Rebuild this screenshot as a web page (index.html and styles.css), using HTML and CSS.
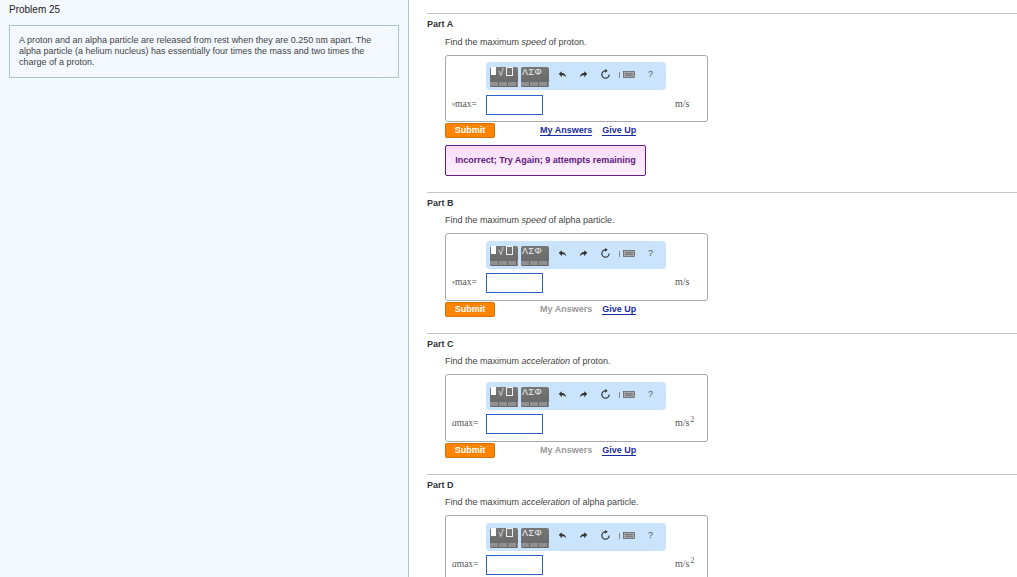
FILE: index.html
```html
<!DOCTYPE html>
<html lang="en">
<head>
<meta charset="utf-8">
<title>Problem 25</title>
<link rel="stylesheet" href="styles.css">
</head>
<body>
<div class="page">
  <aside class="left">
    <h1 class="prob">Problem 25</h1>
    <div class="intro">A proton and an alpha particle are released from rest when they are 0.250 <span class="serif">nm</span> apart. The alpha particle (a helium nucleus) has essentially four times the mass and two times the charge of a proton.</div>
  </aside>
  <main class="right">
    <section class="part">
      <h2 class="ptitle">Part A</h2>
      <p class="q">Find the maximum <em>speed</em> of proton.</p>
      <div class="box">
        <div class="tbwrap"><div class="toolbar">
          <span class="tpl"><span class="tpl-t"><i class="sq"></i>√<i class="sq2"></i></span><span class="tpl-b"></span></span>
          <span class="tpl"><span class="tpl-t greek">ΛΣΦ</span><span class="tpl-b"></span></span>
          <svg class="ic ic1" viewBox="0 0 12 12"><path d="M1 5 5 1.5V4c3.500 0 5.500 2 6 6-1.500-2.500-3-3-6-3v2.500z"/></svg>
          <svg class="ic ic2" viewBox="0 0 12 12"><path d="M11 5 7 1.500V4C3.500 4 1.500 6 1 10c1.500-2.500 3-3 6-3v2.500z"/></svg>
          <svg class="ic3" viewBox="0 0 12 12"><path d="M6 2a4 4 0 1 0 4 4"/><path class="fillp" d="M5.500 0 8.500 2 5.500 4z"/></svg>
          <span class="kb"><i class="bar"></i><svg class="kbd" viewBox="0 0 14 8"><rect x=".5" y=".5" width="13" height="7"/><path d="M2.500 3h9M2.500 5h9"/></svg></span>
          <span class="help">?</span>
        </div></div>
        <div class="row">
          <span class="var"><i class="vv">v</i>max=</span>
          <span class="inp"></span>
          <span class="unit">m/s</span>
        </div>
      </div>
      <div class="actions">
        <span class="submit">Submit</span>
        <span class="links"><a class="link">My Answers</a><a class="link">Give Up</a></span>
      </div>
      <div class="msg">Incorrect; Try Again; 9 attempts remaining</div>
    </section>
    <section class="part">
      <h2 class="ptitle">Part B</h2>
      <p class="q">Find the maximum <em>speed</em> of alpha particle.</p>
      <div class="box">
        <div class="tbwrap"><div class="toolbar">
          <span class="tpl"><span class="tpl-t"><i class="sq"></i>√<i class="sq2"></i></span><span class="tpl-b"></span></span>
          <span class="tpl"><span class="tpl-t greek">ΛΣΦ</span><span class="tpl-b"></span></span>
          <svg class="ic ic1" viewBox="0 0 12 12"><path d="M1 5 5 1.5V4c3.500 0 5.500 2 6 6-1.500-2.500-3-3-6-3v2.500z"/></svg>
          <svg class="ic ic2" viewBox="0 0 12 12"><path d="M11 5 7 1.500V4C3.500 4 1.500 6 1 10c1.500-2.500 3-3 6-3v2.500z"/></svg>
          <svg class="ic3" viewBox="0 0 12 12"><path d="M6 2a4 4 0 1 0 4 4"/><path class="fillp" d="M5.500 0 8.500 2 5.500 4z"/></svg>
          <span class="kb"><i class="bar"></i><svg class="kbd" viewBox="0 0 14 8"><rect x=".5" y=".5" width="13" height="7"/><path d="M2.500 3h9M2.500 5h9"/></svg></span>
          <span class="help">?</span>
        </div></div>
        <div class="row">
          <span class="var"><i class="vv">v</i>max=</span>
          <span class="inp"></span>
          <span class="unit">m/s</span>
        </div>
      </div>
      <div class="actions">
        <span class="submit">Submit</span>
        <span class="links"><a class="link off">My Answers</a><a class="link">Give Up</a></span>
      </div>
    </section>
    <section class="part">
      <h2 class="ptitle">Part C</h2>
      <p class="q">Find the maximum <em>acceleration</em> of proton.</p>
      <div class="box">
        <div class="tbwrap"><div class="toolbar">
          <span class="tpl"><span class="tpl-t"><i class="sq"></i>√<i class="sq2"></i></span><span class="tpl-b"></span></span>
          <span class="tpl"><span class="tpl-t greek">ΛΣΦ</span><span class="tpl-b"></span></span>
          <svg class="ic ic1" viewBox="0 0 12 12"><path d="M1 5 5 1.5V4c3.500 0 5.500 2 6 6-1.500-2.500-3-3-6-3v2.500z"/></svg>
          <svg class="ic ic2" viewBox="0 0 12 12"><path d="M11 5 7 1.500V4C3.500 4 1.500 6 1 10c1.500-2.500 3-3 6-3v2.500z"/></svg>
          <svg class="ic3" viewBox="0 0 12 12"><path d="M6 2a4 4 0 1 0 4 4"/><path class="fillp" d="M5.500 0 8.500 2 5.500 4z"/></svg>
          <span class="kb"><i class="bar"></i><svg class="kbd" viewBox="0 0 14 8"><rect x=".5" y=".5" width="13" height="7"/><path d="M2.500 3h9M2.500 5h9"/></svg></span>
          <span class="help">?</span>
        </div></div>
        <div class="row">
          <span class="var"><i class="aa">a</i>max=</span>
          <span class="inp"></span>
          <span class="unit">m/s<sup class="sup">2</sup></span>
        </div>
      </div>
      <div class="actions">
        <span class="submit">Submit</span>
        <span class="links"><a class="link off">My Answers</a><a class="link">Give Up</a></span>
      </div>
    </section>
    <section class="part">
      <h2 class="ptitle">Part D</h2>
      <p class="q">Find the maximum <em>acceleration</em> of alpha particle.</p>
      <div class="box">
        <div class="tbwrap"><div class="toolbar">
          <span class="tpl"><span class="tpl-t"><i class="sq"></i>√<i class="sq2"></i></span><span class="tpl-b"></span></span>
          <span class="tpl"><span class="tpl-t greek">ΛΣΦ</span><span class="tpl-b"></span></span>
          <svg class="ic ic1" viewBox="0 0 12 12"><path d="M1 5 5 1.5V4c3.500 0 5.500 2 6 6-1.500-2.500-3-3-6-3v2.500z"/></svg>
          <svg class="ic ic2" viewBox="0 0 12 12"><path d="M11 5 7 1.500V4C3.500 4 1.500 6 1 10c1.500-2.500 3-3 6-3v2.500z"/></svg>
          <svg class="ic3" viewBox="0 0 12 12"><path d="M6 2a4 4 0 1 0 4 4"/><path class="fillp" d="M5.500 0 8.500 2 5.500 4z"/></svg>
          <span class="kb"><i class="bar"></i><svg class="kbd" viewBox="0 0 14 8"><rect x=".5" y=".5" width="13" height="7"/><path d="M2.500 3h9M2.500 5h9"/></svg></span>
          <span class="help">?</span>
        </div></div>
        <div class="row">
          <span class="var"><i class="aa">a</i>max=</span>
          <span class="inp"></span>
          <span class="unit">m/s<sup class="sup">2</sup></span>
        </div>
      </div>
    </section>
  </main>
</div>
</body>
</html>
```
FILE: styles.css
```css
html, body { margin: 0; padding: 0; height: 100%; overflow: hidden; background: #fff; }
body { font-family: "Liberation Sans", Arial, sans-serif; font-size: 9px; color: #333; }
.page { display: flex; height: 577px; overflow: hidden; }
.left { box-sizing: border-box; width: 409px; flex: none; background: #f4f9ff; border-right: 1px solid #a9c5dc; padding: 4px 9px 0; }
.prob { margin: 0; font-size: 10px; font-weight: 400; line-height: 12px; color: #222; }
.intro { box-sizing: border-box; width: 390px; height: 53px; margin-top: 9px; border: 1px solid #a9c5dc; padding: 9px 9px 0; font-size: 9px; line-height: 11px; color: #444; }
.serif { font-family: "Liberation Serif", serif; font-size: 9.500px; line-height: 9px; }
.right { flex: 1; min-width: 0; padding: 13px 0 0 18px; }
.part { border-top: 1px solid #c4c4c4; height: 140px; }
.part:first-child { height: 178px; }
.ptitle { margin: 0; padding-top: 5px; font-size: 9px; line-height: 11px; font-weight: 700; color: #333; }
.q { margin: 6px 0 0 18px; font-size: 9px; line-height: 11px; color: #444; }
.part:first-child .q { margin-top: 7px; }
.box { box-sizing: border-box; width: 263px; height: 68px; margin: 7px 0 0 18px; border: 1px solid #aaa; border-radius: 3px; background: #fff; }
.part:first-child .box { height: 67px; }
.tbwrap { padding: 7px 0 0 40px; }
.part:first-child .tbwrap { padding-top: 6px; }
.toolbar { box-sizing: border-box; width: 180px; height: 28px; background: #c9e4fc; border-radius: 4px; display: flex; align-items: center; padding-left: 4px; }
.tpl { width: 28px; height: 20px; margin-top: 1px; border-radius: 2px; margin-right: 3px; background: linear-gradient(#777, #666); display: flex; flex-direction: column; flex: none; }
.tpl-t { height: 15px; font-size: 10px; line-height: 11px; color: #eee; display: flex; align-items: flex-start; padding-left: 1px; }
.greek { font-size: 9px; line-height: 10px; letter-spacing: .5px; }
.sq { width: 5px; height: 8px; background: #fff; margin: 0 2px 0 0; }
.sq2 { width: 5px; height: 7px; border: 1px solid #eee; margin: 0 0 0 2px; }
.tpl-b { height: 5px; box-sizing: border-box; border-radius: 0 0 2px 2px; border-bottom: 1px solid #666; background: repeating-linear-gradient(90deg, #909090 0 8px, #666 8px 9px); }
.ic { width: 9px; height: 9px; fill: #333; flex: none; margin-bottom: 4px; }
.ic1 { margin-left: 6px; }
.ic2 { margin-left: 12px; }
.ic3 { width: 11px; height: 11px; margin-left: 12px; margin-bottom: 4px; flex: none; fill: none; stroke: #333; stroke-width: 1.300; }
.fillp { fill: #333; stroke: none; }
.kb { display: flex; align-items: center; margin-left: 8px; margin-bottom: 3px; flex: none; }
.bar { width: 1px; height: 6px; background: #888; margin-right: 3px; }
.kbd { width: 12px; height: 7px; fill: #aaa; stroke: #555; stroke-width: .8; }
.help { margin-left: 13px; margin-bottom: 4px; font-size: 9px; color: #555; }
.row { display: flex; align-items: center; height: 20px; margin-top: 4px; }
.part:first-child .row { margin-top: 5px; }
.var { box-sizing: border-box; width: 40px; padding: 0 0 3px 6px; font-family: "Liberation Serif", serif; font-size: 9.500px; color: #555; white-space: nowrap; }
.vv { font-size: 7px; vertical-align: 1px; }
.aa { font-size: 9.500px; }
.inp { box-sizing: border-box; width: 57px; height: 20px; border: 1px solid #2a62c8; background: #fff; }
.unit { margin-left: 132px; padding-bottom: 3px; font-family: "Liberation Serif", serif; font-size: 10px; color: #555; }
.sup { font-size: 7.500px; line-height: 0; vertical-align: 4px; margin-left: 1px; }
.actions { display: flex; align-items: center; margin: 1px 0 0 18px; height: 15px; }
.submit { box-sizing: border-box; width: 50px; height: 15px; background: #ff8500; border: 1px solid #d97000; border-radius: 2px; color: #fff; font-size: 9px; font-weight: 700; line-height: 13px; text-align: center; }
.links { display: flex; gap: 10px; margin-left: 45px; }
.link { font-size: 9px; font-weight: 700; line-height: 10px; color: #1a2ea0; border-bottom: 1px solid #1a2ea0; }
.off { color: #999; border-bottom-color: transparent; }
.msg { box-sizing: border-box; width: 201px; height: 31px; margin: 7px 0 0 18px; border: 1px solid #6a1b8a; border-radius: 2px; background: linear-gradient(#f8dcfb, #fff0ff); color: #5a1a7a; font-size: 9px; font-weight: 700; line-height: 29px; text-align: center; }
```
